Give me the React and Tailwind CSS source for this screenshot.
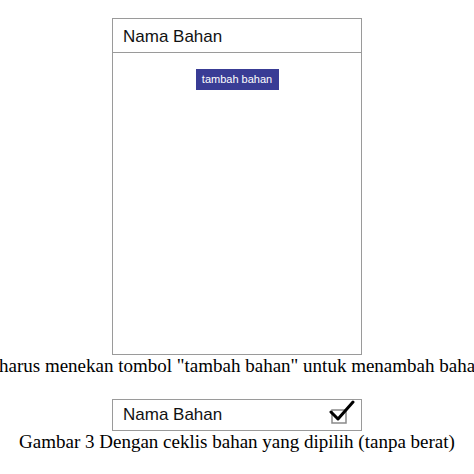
export default function App() {
  return (
    <div className="w-[474px] h-[474px] overflow-hidden bg-white flex flex-col items-center">
      {/* phone screen mockup */}
      <div className="mt-[18px] w-[250px] h-[337px] shrink-0 border border-[#9a9a9a] flex flex-col">
        <div className="h-[34px] border-b border-[#9a9a9a] flex items-center pl-[10px] pt-[2px] text-[17px] text-[#111] font-['Liberation_Sans',Arial,sans-serif]">
          Nama Bahan
        </div>
        <div className="flex justify-center pt-[16px]">
          <button className="w-[83px] h-[21px] bg-[#393c95] text-white text-[11px] font-['Liberation_Sans',Arial,sans-serif] flex items-center justify-center">
            tambah bahan
          </button>
        </div>
      </div>
      <div className="w-[474px] h-[22px] shrink-0 overflow-hidden">
        <p className="-ml-[1px] whitespace-nowrap text-[19px] leading-[22px] text-black font-['Liberation_Serif','Times_New_Roman',serif]">
          harus menekan tombol "tambah bahan" untuk menambah bahan
        </p>
      </div>
      {/* selected row */}
      <div className="mt-[22px] w-[250px] h-[32px] shrink-0 border border-[#9a9a9a] flex items-center justify-between pl-[10px] pr-[6px]">
        <span className="text-[17px] text-[#111] font-['Liberation_Sans',Arial,sans-serif]">Nama Bahan</span>
        <svg width="26" height="26" viewBox="0 0 26 26" className="-mt-[6px]">
          <rect x="3" y="11" width="14" height="13" fill="none" stroke="#8a8a8a" strokeWidth="1.5" />
          <path d="M2 13 L9 20 L24 3" fill="none" stroke="#000" strokeWidth="3" strokeLinecap="round" strokeLinejoin="round" />
        </svg>
      </div>
      <p className="whitespace-nowrap text-[19px] leading-[22px] text-black font-['Liberation_Serif','Times_New_Roman',serif]">
        Gambar 3 Dengan ceklis bahan yang dipilih (tanpa berat)
      </p>
    </div>
  );
}
